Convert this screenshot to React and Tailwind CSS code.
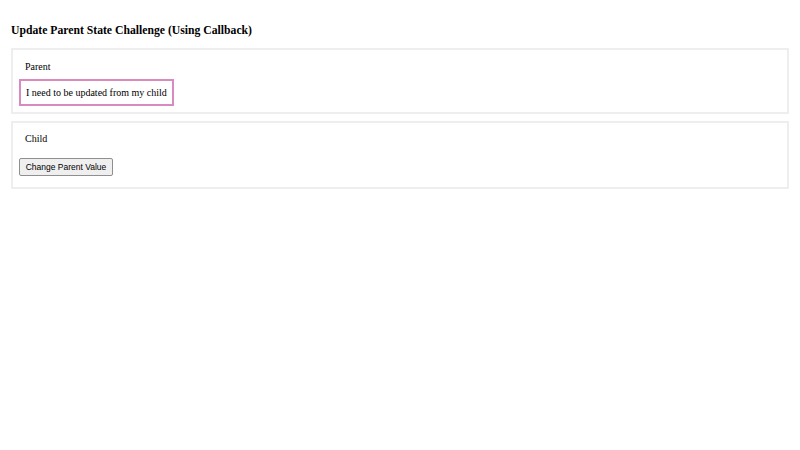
import React, { useState } from 'react'

function Child({ onChange }) {
  return (
    <div className="border-2 border-[#eeeeee] p-[6px]">
      <div className="px-[6px] pt-[4px] pb-[13px] leading-[12px]">Child</div>
      <button
        onClick={onChange}
        className="block mb-[5px] w-[94px] h-[18px] border border-[#8f8f8f] rounded-[2px] bg-[#efefef] text-[8.5px] leading-none text-black font-['Liberation_Sans',Arial,sans-serif]"
      >
        Change Parent Value
      </button>
    </div>
  )
}

export default function App() {
  const [value, setValue] = useState('I need to be updated from my child')

  return (
    <div className="min-h-screen bg-white text-black font-['Liberation_Serif','Times_New_Roman',serif] text-[10px] px-[11px] pt-[24px]">
      <h3 className="text-[11.7px] font-bold leading-[14px] mb-[10px]">
        Update Parent State Challenge (Using Callback)
      </h3>

      <div className="border-2 border-[#eeeeee] p-[6px] mb-[7px]">
        <div className="px-[6px] pt-[5px] pb-[6px] leading-[12px]">Parent</div>
        <div className="inline-block align-top border-2 border-[#d98bc0] px-[5px] pt-[6px] pb-[5px] leading-[12px]">
          {value}
        </div>
      </div>

      <Child onChange={() => setValue('Updated from child!')} />
    </div>
  )
}
